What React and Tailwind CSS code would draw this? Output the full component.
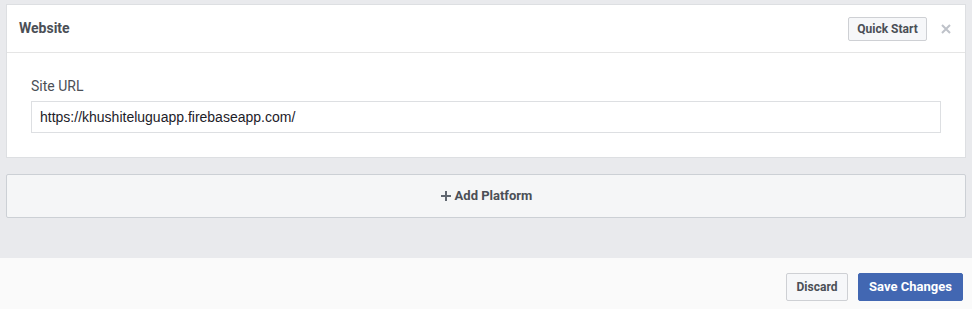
export default function App() {
  return (
    <div className="w-[972px] h-[309px] bg-[#e9eaed] flex flex-col overflow-hidden" style={{ fontFamily: "Roboto, 'Liberation Sans', sans-serif" }}>
      <div className="px-[6px] pt-[4px] flex-1">
        <div className="bg-white border border-[#dddfe2] w-[960px]">
          <div className="h-[48px] flex items-center justify-between pl-[12px] pr-[12px] border-b border-[#e5e5e5]">
            <span className="text-[14px] font-bold text-[#4b4f56]">Website</span>
            <div className="flex items-center gap-[14px]">
              <button className="h-[24px] w-[79px] bg-[#f6f7f9] border border-[#ced0d4] rounded-[2px] text-[12px] font-bold text-[#4b4f56] leading-none">Quick Start</button>
              <svg width="10" height="10" viewBox="0 0 10 10" className="mr-[2px]">
                <path d="M1 1L9 9M9 1L1 9" stroke="#bec2c9" strokeWidth="2" />
              </svg>
            </div>
          </div>
          <div className="pt-[25px] pb-[24px] pl-[24px] pr-[24px]">
            <div className="text-[14px] text-[#4b4f56] leading-[16px] mb-[7px]">Site URL</div>
            <div className="h-[32px] border border-[#dddfe2] flex items-center px-[8px] text-[14px] text-[#1d2129]" style={{ fontFamily: "'Liberation Sans', Arial, sans-serif" }}>
              https://khushiteluguapp.firebaseapp.com/
            </div>
          </div>
        </div>
        <div className="mt-[16px] h-[44px] w-[960px] bg-[#f5f6f7] border border-[#ccd0d5] rounded-[2px] flex items-center justify-center text-[13px] font-bold text-[#4b4f56]">
          <svg width="12" height="12" viewBox="0 0 12 12" className="mr-[3px]">
            <path d="M6 1V11M1 6H11" stroke="#606770" strokeWidth="2" />
          </svg>
          Add Platform
        </div>
      </div>
      <div className="h-[51px] bg-[#fafafa] flex items-start justify-end pt-[15px] pr-[9px] gap-[10px]">
        <button className="h-[28px] w-[62px] bg-[#f6f7f9] border border-[#ced0d4] rounded-[2px] text-[12px] font-bold text-[#4b4f56]">Discard</button>
        <button className="h-[28px] w-[105px] bg-[#4267b2] border border-[#4267b2] rounded-[2px] text-[13px] font-bold text-white">Save Changes</button>
      </div>
    </div>
  );
}
